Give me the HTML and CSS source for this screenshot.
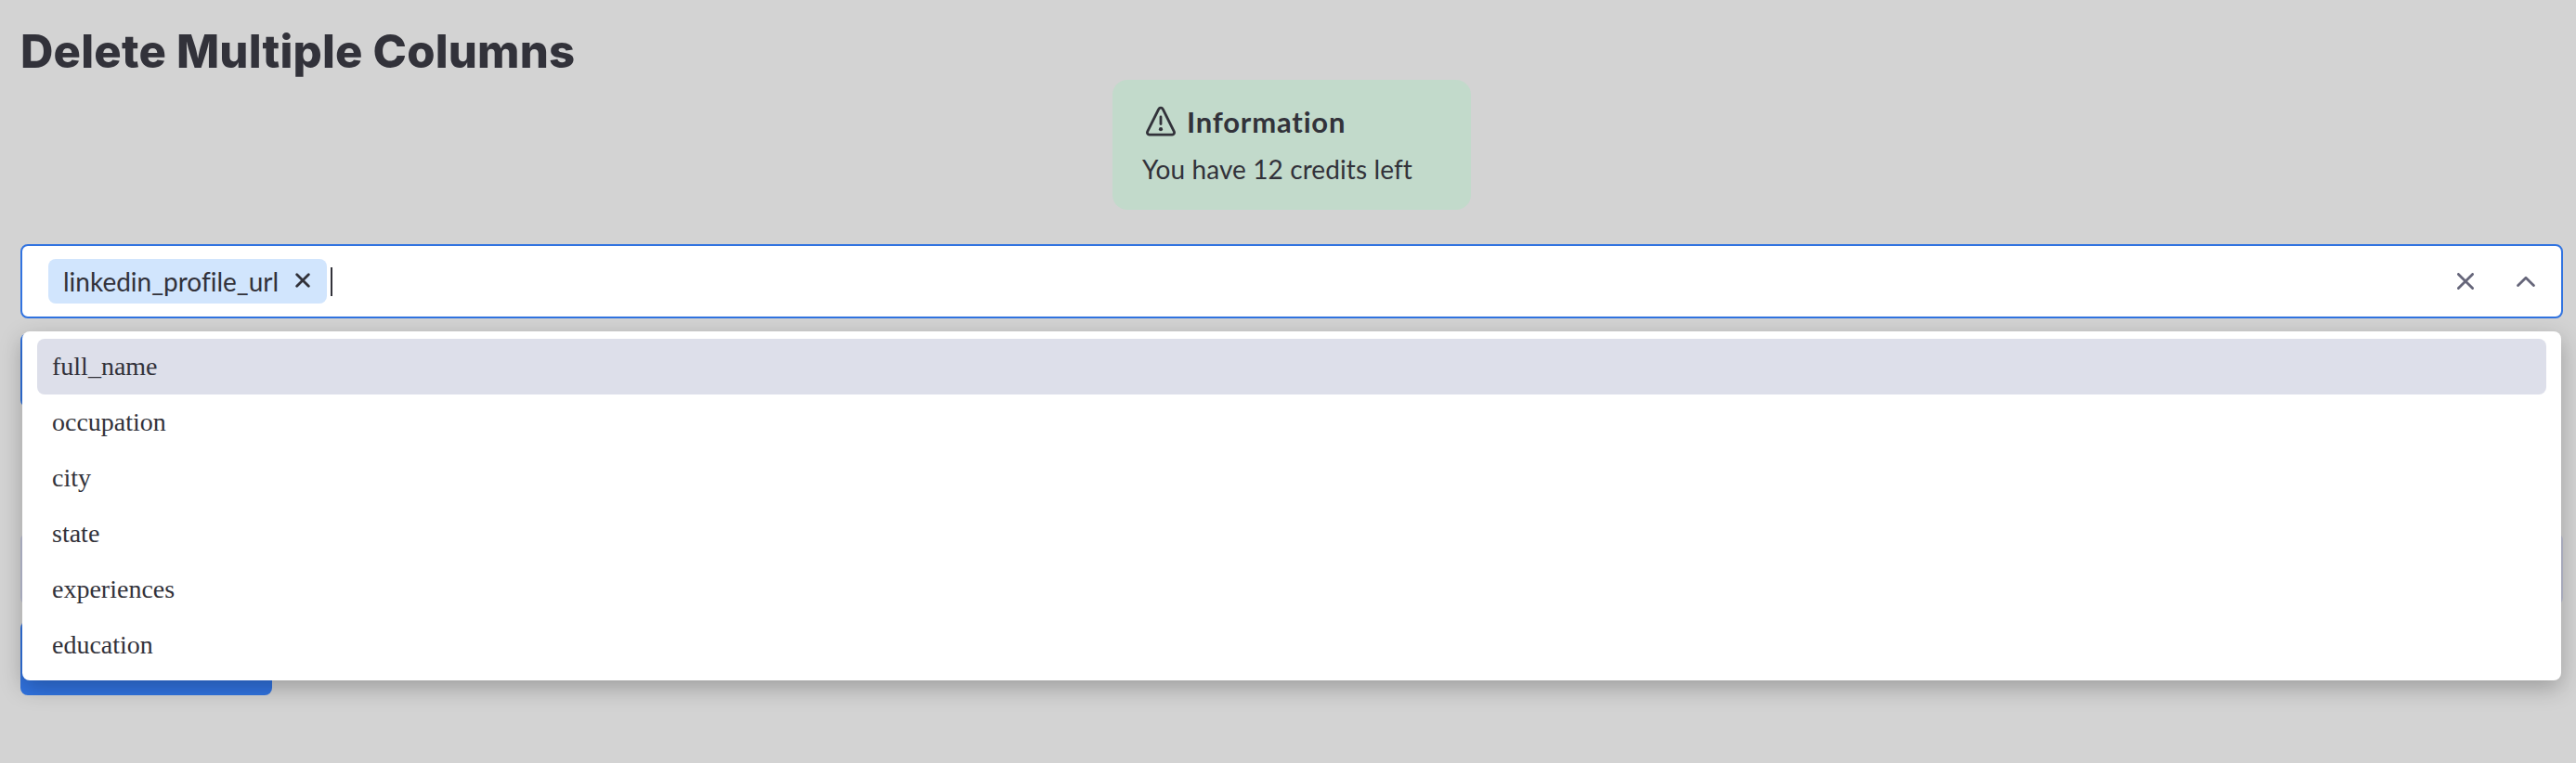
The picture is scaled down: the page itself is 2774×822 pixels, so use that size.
FILE: index.html
```
<!DOCTYPE html>
<html lang="en">
<head>
    <meta charset="UTF-8"/>
    <title>Delete Multiple Columns</title>
    <link rel="stylesheet" href="styles.css">
</head>
<body>
<main>
    <h1>Delete Multiple Columns</h1>
    <div class="alert">
        <div class="alert-title">
            <svg class="alert-icon" width="36" height="36" viewBox="0 0 36 36">
                <path d="M15.7 4.6 3.6 28.8a2.4 2.4 0 0 0 2.1 3.4h24.6a2.4 2.4 0 0 0 2.1-3.4L20.3 4.6a2.6 2.6 0 0 0-4.6 0z"/>
                <path d="M18 13v7.5"/>
                <circle cx="18" cy="26.2" r="2.1"/>
            </svg>
            <strong>Information</strong>
        </div>
        <p>You have 12 credits left</p>
    </div>
    <div class="select">
        <div class="control">
            <div class="chip">
                <span class="chip-label">linkedin_profile_url</span>
                <svg width="16" height="16" viewBox="0 0 16 16"><path d="M1.7 1.7l12.6 12.6M14.3 1.7L1.7 14.3"/></svg>
            </div>
            <span class="caret"></span>
            <div class="indicators">
                <svg width="18" height="18" viewBox="0 0 18 18"><path d="M1.4 1.4l15.2 15.2M16.6 1.4L1.4 16.6"/></svg>
                <svg width="20" height="18" viewBox="0 0 20 18"><path d="M1.6 13.4L10 5.2l8.4 8.2"/></svg>
            </div>
        </div>
        <ul class="menu">
            <li class="focused">full_name</li>
            <li>occupation</li>
            <li>city</li>
            <li>state</li>
            <li>experiences</li>
            <li>education</li>
        </ul>
    </div>
    <div class="button delete-button"></div>
    <div class="output"></div>
    <div class="button download-button"></div>
</main>
</body>
</html>
```
FILE: styles.css
```
body {
    margin: 0;
    background-color: #d3d3d3;
    color: #32323a;
    font-family: Lato, sans-serif;
}

main {
    display: flex;
    flex-direction: column;
    height: 822px;
    padding: 0 14px 0 22px;
    box-sizing: border-box;
}

h1 {
    margin: 0;
    padding-top: 21px;
    height: 65px;
    font-family: Inter, sans-serif;
    font-size: 49px;
    font-weight: 800;
    line-height: 70px;
    letter-spacing: 0.2px;
}

.alert {
    align-self: center;
    width: 386px;
    height: 140px;
    padding: 26px 32px;
    box-sizing: border-box;
    border-radius: 16px;
    background-color: #c2dacb;
}

.alert-title {
    display: flex;
    align-items: center;
    gap: 10px;
    height: 38px;
    font-size: 31px;
    line-height: 38px;
    letter-spacing: 0.8px;
}

.alert-icon {
    margin-left: 2px;
}

svg path {
    fill: none;
    stroke: #32323a;
    stroke-width: 2.8;
    stroke-linecap: round;
    stroke-linejoin: round;
}

svg circle {
    fill: #32323a;
}

.alert p {
    margin: 14px 0 0;
    font-size: 28px;
    line-height: 36px;
    letter-spacing: 0.1px;
}

.select {
    position: relative;
    margin-top: 37px;
}

.control {
    display: flex;
    align-items: center;
    height: 80px;
    padding: 0 29px 0 28px;
    box-sizing: border-box;
    border: 2px solid #3173e0;
    border-radius: 8px;
    background-color: #fff;
}

.chip {
    display: flex;
    align-items: center;
    justify-content: space-between;
    width: 300px;
    height: 48px;
    padding: 0 18px 0 16px;
    box-sizing: border-box;
    border-radius: 8px;
    background-color: #d1e5fd;
}

.chip svg {
    margin-bottom: 2px;
}

.chip-label {
    font-size: 28px;
    font-variant-ligatures: none;
}

.caret {
    width: 2px;
    height: 31px;
    margin-left: 4px;
    background-color: #32323a;
}

.indicators {
    display: flex;
    gap: 46px;
    margin: 0 -1px 1px auto;
}

.indicators path {
    stroke: #66667a;
}

.menu {
    position: absolute;
    top: 94px;
    left: 2px;
    right: 2px;
    z-index: 1;
    margin: 0;
    padding: 8px 16px;
    border-radius: 8px;
    background-color: #fff;
    box-shadow: 0 8px 24px rgba(0, 0, 0, 0.26);
    list-style: none;
    font-family: "Liberation Serif", serif;
    font-size: 28px;
}

.menu li {
    height: 60px;
    padding: 0 16px;
    border-radius: 8px;
    line-height: 60px;
}

.focused {
    background-color: #dddfea;
}

.button {
    height: 80px;
    border-radius: 8px;
    background-color: #3173e0;
}

.delete-button {
    width: 300px;
    margin-top: 16px;
}

.output {
    height: 78px;
    margin-top: 135px;
    box-sizing: border-box;
    border: 2px solid #bcbfd3;
    border-radius: 8px;
    background-color: #dddfea;
}

.download-button {
    width: 271px;
    margin-top: 17px;
}
```
